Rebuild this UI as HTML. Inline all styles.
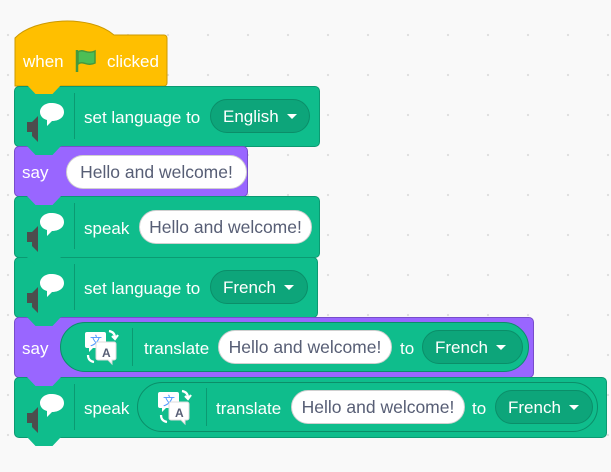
<!DOCTYPE html>
<html><head><style>
body{margin:0;width:611px;height:472px;overflow:hidden;background:#f9f9f9;
background-image:radial-gradient(circle,#dedede 1px,transparent 1.3px);background-size:40px 40px;background-position:-12px 15px;
font-family:"Liberation Sans",sans-serif;font-size:17px;color:#fff;position:relative}
.b{position:absolute;box-sizing:border-box;border-radius:5px;display:flex;align-items:center}
.g{background:#0fbd8c;border:1px solid #0b9a72}
.p{background:#9966ff;border:1px solid #774dcb}
.tab{position:absolute;width:34px;height:9px;clip-path:polygon(0 0,100% 0,75% 100%,25% 100%)}
.a{position:absolute;white-space:nowrap}
.in{position:absolute;box-sizing:border-box;background:#fff;border:1px solid #d0d0d0;border-radius:18px;height:34px;color:#575e75;display:flex;align-items:center;justify-content:center;font-size:17.5px;padding-top:1px}
.dd{position:absolute;box-sizing:border-box;background:#0da57a;border:1px solid #0b8e69;border-radius:18px;height:34px;display:flex;align-items:center;padding-left:12px;padding-top:1px}
.dd:after{content:"";border-left:5px solid transparent;border-right:5px solid transparent;border-top:5px solid #fff;margin-left:8px}
.rp{position:absolute;box-sizing:border-box;background:#0fbd8c;border:1px solid #0b8e69;border-radius:26px;height:50px}
.sep{position:absolute;width:1px;background:#0b9a72}
</style></head><body>
<svg style="position:absolute;left:14px;top:20px" width="155" height="68"><path d="M1,66 V18 C20,-2 75,-6 100,15 H150 a3,3 0 0 1 3,3 V63 a3,3 0 0 1 -3,3 Z" fill="#ffbf00" stroke="#cc9900"/></svg>
<div class="a" style="left:23px;top:52px">when</div>
<svg style="position:absolute;left:74px;top:48px" width="24" height="26"><path d="M3,2 V24" stroke="#45993d" stroke-width="2.5"/><path d="M4,4 C9,0 13,7 21,3 V15 C13,19 9,12 4,16Z" fill="#4cbf56" stroke="#45993d" stroke-width="1.5"/></svg>
<div class="a" style="left:107px;top:52px">clicked</div>

<div class="b g" style="left:14px;top:86px;width:306px;height:61px"></div>
<div class="b p" style="left:14px;top:146px;width:234px;height:51px"></div>
<div class="b g" style="left:14px;top:196px;width:306px;height:62px"></div>
<div class="b g" style="left:14px;top:257px;width:304px;height:61px"></div>
<div class="b p" style="left:14px;top:317px;width:520px;height:61px"></div>
<div class="b g" style="left:14px;top:377px;width:593px;height:61px"></div>

<div class="tab" style="left:27px;top:85px;background:#ffbf00"></div>
<div class="tab" style="left:27px;top:146px;background:#0fbd8c"></div>
<div class="tab" style="left:27px;top:196px;background:#9966ff"></div>
<div class="tab" style="left:27px;top:257px;background:#0fbd8c"></div>
<div class="tab" style="left:27px;top:317px;background:#0fbd8c"></div>
<div class="tab" style="left:27px;top:377px;background:#9966ff"></div>
<div class="tab" style="left:27px;top:437px;background:#0fbd8c"></div>

<svg width="0" height="0" style="position:absolute"><defs><g id="spk"><path d="M1,30 h5 v-10 h-5z M6,20 l6,-6 v26 l-6,-6z" fill="#4d4d4d"/><path d="M25,1 c9,0 13,4 13,9 c0,6 -6,9 -12,9 l-5,5 l0,-6 c-4,-1 -7,-4 -7,-8 c0,-5 5,-9 11,-9z" fill="#fff"/></g>
<g id="tr"><path d="M3,3 h17 a2,2 0 0 1 2,2 v12 a2,2 0 0 1 -2,2 h-11 l-4,4 v-4 h-2 a2,2 0 0 1 -2,-2 v-12 a2,2 0 0 1 2,-2z" fill="#fff"/><text x="6" y="16" font-size="12" fill="#4c97ff" font-family="Noto Sans CJK SC,sans-serif">文</text><path d="M14,13 h16 a2,2 0 0 1 2,2 v14 a2,2 0 0 1 -2,2 h-2 v4 l-4,-4 h-10 a2,2 0 0 1 -2,-2 v-14 a2,2 0 0 1 2,-2z" fill="#fff" stroke="#ddd"/><text x="18" y="28" font-size="12" font-weight="bold" fill="#575e75">A</text><path d="M25,2 q6,1 6,7 M28,7 l3,3 3,-4" stroke="#fff" stroke-width="2.2" fill="none"/><path d="M4,26 q0,6 6,7" stroke="#fff" stroke-width="2.2" fill="none"/></g></defs></svg>
<svg style="position:absolute;left:26px;top:102px" width="42" height="44"><use href="#spk"/></svg>
<svg style="position:absolute;left:26px;top:212px" width="42" height="44"><use href="#spk"/></svg>
<svg style="position:absolute;left:26px;top:273px" width="42" height="44"><use href="#spk"/></svg>
<svg style="position:absolute;left:26px;top:393px" width="42" height="44"><use href="#spk"/></svg>
<div class="sep" style="left:74px;top:93px;height:46px"></div>
<div class="sep" style="left:74px;top:203px;height:46px"></div>
<div class="sep" style="left:74px;top:264px;height:46px"></div>
<div class="sep" style="left:74px;top:384px;height:46px"></div>

<div class="a" style="left:84px;top:108px">set language to</div>
<div class="dd" style="left:210px;top:99px;width:100px">English</div>

<div class="a" style="left:22px;top:163px">say</div>
<div class="in" style="left:66px;top:155px;width:181px">Hello and welcome!</div>

<div class="a" style="left:84px;top:219px">speak</div>
<div class="in" style="left:139px;top:210px;width:173px">Hello and welcome!</div>

<div class="a" style="left:84px;top:279px">set language to</div>
<div class="dd" style="left:210px;top:270px;width:98px">French</div>

<div class="a" style="left:22px;top:339px">say</div>
<div class="rp" style="left:60px;top:322px;width:469px"></div>
<svg style="position:absolute;left:84px;top:329px" width="36" height="38"><use href="#tr"/></svg>
<div class="sep" style="left:132px;top:328px;height:38px"></div>
<div class="a" style="left:144px;top:339px">translate</div>
<div class="in" style="left:218px;top:330px;width:174px">Hello and welcome!</div>
<div class="a" style="left:400px;top:339px">to</div>
<div class="dd" style="left:422px;top:330px;width:101px">French</div>

<div class="a" style="left:84px;top:399px">speak</div>
<div class="rp" style="left:137px;top:382px;width:461px"></div>
<svg style="position:absolute;left:157px;top:389px" width="36" height="38"><use href="#tr"/></svg>
<div class="sep" style="left:206px;top:388px;height:38px"></div>
<div class="a" style="left:216px;top:399px">translate</div>
<div class="in" style="left:291px;top:390px;width:174px">Hello and welcome!</div>
<div class="a" style="left:472px;top:399px">to</div>
<div class="dd" style="left:495px;top:390px;width:98px">French</div>
</body></html>
